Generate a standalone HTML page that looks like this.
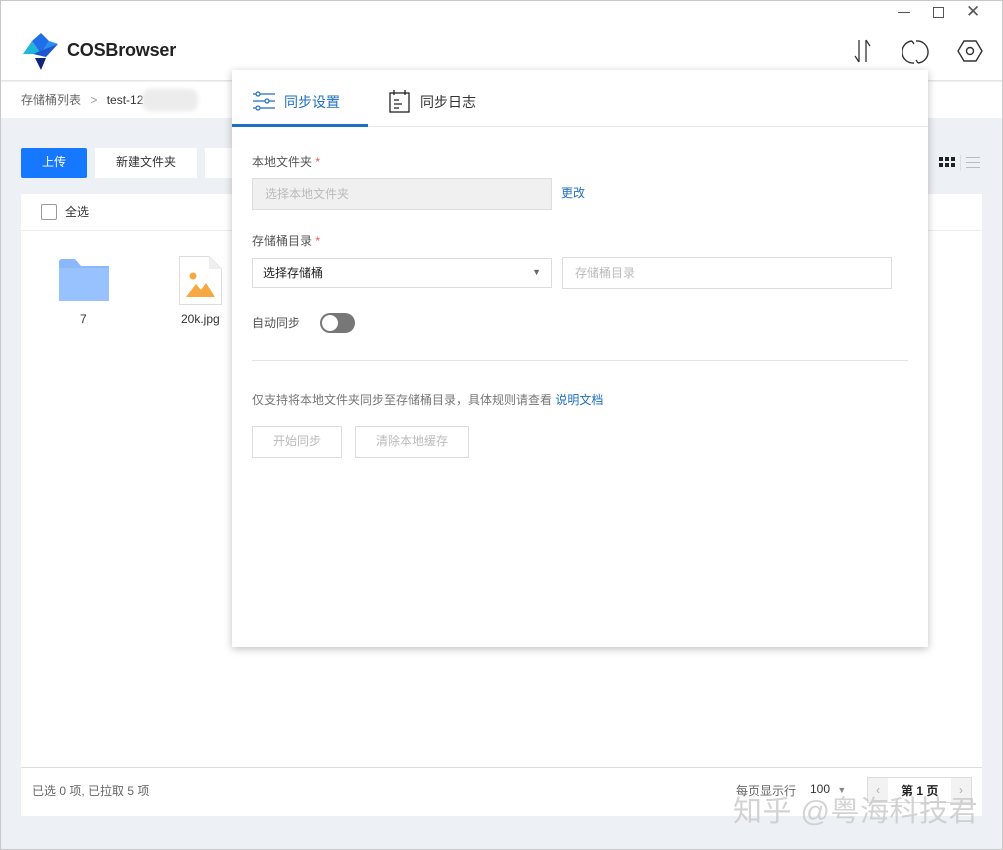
<!DOCTYPE html>
<html><head><meta charset="utf-8"><style>
*{box-sizing:border-box;margin:0;padding:0}
body{width:1003px;height:850px;overflow:hidden;font-family:"Liberation Sans","Noto Sans CJK SC",sans-serif;font-size:12px;color:#333;background:#edf0f4;position:relative}
.abs{position:absolute}
.win{position:absolute;left:0;top:0;width:1003px;height:850px;border:1px solid #c8c8c8;pointer-events:none}
</style></head><body>
<div class="abs" style="left:0;top:0;width:1003px;height:81px;background:#fff;border-bottom:1px solid #e6e6e6"></div>
<svg class="abs" style="left:21px;top:32px" width="40" height="40" viewBox="0 0 40 40">
<polygon points="2,22 11,9 20,22" fill="#1fb6d9"/><polygon points="11,9 20,22 28,9 20,1" fill="#1f6fe8"/>
<polygon points="20,22 37,12 28,9" fill="#2a8cf0"/><polygon points="12,22 37,12 25,25" fill="#1e56d0"/>
<polygon points="14,26 25,26 20,38" fill="#12237a"/></svg>
<div class="abs" style="left:67px;top:40px;font-size:18px;font-weight:bold;color:#222;letter-spacing:-0.2px">COSBrowser</div>
<div class="abs" style="left:898px;top:12px;width:12px;border-top:1px solid #555"></div>
<div class="abs" style="left:933px;top:7px;width:11px;height:11px;border:1px solid #555"></div>
<div class="abs" style="left:966px;top:2px;font-size:17px;color:#555">✕</div>
<svg class="abs" style="left:850px;top:38px" width="25" height="26"><path d="M9 2V24M9 24L5 18M16 24V2M16 2L20 8" stroke="#333" stroke-width="1.3" fill="none"/></svg>
<svg class="abs" style="left:902px;top:38px" width="28" height="28"><path d="M10 3A11 11 0 0 0 12 25M16 25A11 11 0 0 0 14 3M10 3L12 6M16 25L14 22" stroke="#333" stroke-width="1.4" fill="none"/></svg>
<svg class="abs" style="left:957px;top:39px" width="26" height="24"><polygon points="7,2 19,2 25,12 19,22 7,22 1,12" stroke="#333" stroke-width="1.4" fill="none"/><circle cx="13" cy="12" r="3.5" stroke="#333" stroke-width="1.4" fill="none"/></svg>
<div class="abs" style="left:0;top:82px;width:1003px;height:36px;background:#fff"></div>
<div class="abs" style="left:21px;top:91px;color:#666">存储桶列表 <span style="color:#999;margin:0 6px">&gt;</span> <span style="color:#333">test-12</span></div>
<div class="abs" style="left:142px;top:89px;width:56px;height:22px;background:#ececec;border-radius:8px;filter:blur(2px)"></div>
<div class="abs" style="left:21px;top:148px;width:66px;height:30px;background:#1677ff;color:#fff;text-align:center;line-height:28px;border-radius:2px">上传</div>
<div class="abs" style="left:95px;top:148px;width:102px;height:30px;background:#fff;text-align:center;line-height:28px">新建文件夹</div>
<div class="abs" style="left:205px;top:148px;width:40px;height:30px;background:#fff"></div>
<svg class="abs" style="left:939px;top:157px" width="17" height="11"><g fill="#222"><rect x="0" y="0" width="4" height="4"/><rect x="6" y="0" width="4" height="4"/><rect x="12" y="0" width="4" height="4"/><rect x="0" y="6" width="4" height="4"/><rect x="6" y="6" width="4" height="4"/><rect x="12" y="6" width="4" height="4"/></g></svg>
<div class="abs" style="left:960px;top:155px;height:16px;border-left:1px solid #ddd"></div>
<div class="abs" style="left:966px;top:157px;width:14px;height:11px;border-top:1px solid #bbb;border-bottom:1px solid #bbb"><div style="margin-top:4px;border-top:1px solid #bbb"></div></div>
<div class="abs" style="left:21px;top:194px;width:961px;height:622px;background:#fff"></div>
<div class="abs" style="left:21px;top:230px;width:961px;border-top:1px solid #eee"></div>
<div class="abs" style="left:41px;top:204px;width:16px;height:16px;border:1px solid #999;border-radius:2px"></div>
<div class="abs" style="left:65px;top:203px">全选</div>
<svg class="abs" style="left:59px;top:259px" width="50" height="42"><path d="M0 3Q0 0 3 0H16L22 7H50V42H0Z" fill="#8ab8fb"/><path d="M0 9H50V42H0Z" fill="#98c2fd"/></svg>
<div class="abs" style="left:80px;top:312px">7</div>
<svg class="abs" style="left:179px;top:256px" width="43" height="49"><path d="M0.5 0.5H30L42.5 13V48.5H0.5Z" fill="#fff" stroke="#ddd"/><path d="M30 0.5V13H42.5" fill="#eee"/><circle cx="14" cy="20" r="3.5" fill="#f7a840"/><path d="M7 41L17 28L22 34L27 27L36 41Z" fill="#f7a840"/></svg>
<div class="abs" style="left:181px;top:312px">20k.jpg</div>
<div class="abs" style="left:21px;top:767px;width:961px;border-top:1px solid #ddd"></div>
<div class="abs" style="left:32px;top:782px;color:#666">已选 0 项, 已拉取 5 项</div>
<div class="abs" style="left:736px;top:782px;color:#666">每页显示行</div>
<div class="abs" style="left:810px;top:782px;color:#333">100 <span style="color:#888;font-size:9px;margin-left:4px">▼</span></div>
<div class="abs" style="left:867px;top:777px;width:105px;height:26px;border:1px solid #ddd;background:#fff"><div style="position:absolute;left:0;top:0;width:20px;height:24px;background:#f2f2f2;color:#aaa;text-align:center;line-height:24px">‹</div><div style="position:absolute;right:0;top:0;width:20px;height:24px;background:#f2f2f2;color:#aaa;text-align:center;line-height:24px">›</div><div style="position:absolute;left:33px;top:4px;font-weight:bold;color:#222">第 1 页</div></div>
<div class="abs" style="left:733px;top:788px;font-size:29px;color:rgba(200,200,200,.8);letter-spacing:0.5px">知乎 @粤海科技君</div>

<div class="abs" style="left:232px;top:70px;width:696px;height:577px;background:#fff;box-shadow:0 2px 8px rgba(0,0,0,.25)">
 <div class="abs" style="left:0;top:56px;width:696px;border-top:1px solid #e8e8e8"></div>
 <div class="abs" style="left:0;top:54px;width:136px;height:3px;background:#1e6fbf"></div>
 <svg class="abs" style="left:21px;top:21px" width="22" height="20"><g stroke="#1e6fbf" stroke-width="1.2" fill="none"><path d="M0 3H3M7 3H22M0 10H12M16 10H22M0 17H3M7 17H22"/><circle cx="5" cy="3" r="2"/><circle cx="14" cy="10" r="2"/><circle cx="5" cy="17" r="2"/></g></svg>
 <div class="abs" style="left:52px;top:22px;font-size:14px;color:#1e6fbf">同步设置</div>
 <svg class="abs" style="left:157px;top:20px" width="22" height="23"><g stroke="#222" stroke-width="1.3" fill="none"><rect x="1" y="3" width="19" height="19"/><path d="M5 0V5M16 0V5M5 10H10M5 14H13M5 18H10"/></g></svg>
 <div class="abs" style="left:188px;top:22px;font-size:14px;color:#333">同步日志</div>
 <div class="abs" style="left:20px;top:83px;color:#555">本地文件夹 <span style="color:#e55">*</span></div>
 <div class="abs" style="left:20px;top:108px;width:300px;height:32px;background:#f0f0f0;border:1px solid #ddd;color:#bbb;padding:6px 12px">选择本地文件夹</div>
 <div class="abs" style="left:329px;top:114px;color:#1e6fbf">更改</div>
 <div class="abs" style="left:20px;top:162px;color:#555">存储桶目录 <span style="color:#e55">*</span></div>
 <div class="abs" style="left:20px;top:188px;width:300px;height:30px;border:1px solid #ddd;color:#222;padding:5px 10px">选择存储桶<span style="position:absolute;right:10px;top:8px;font-size:9px;color:#666">▼</span></div>
 <div class="abs" style="left:330px;top:187px;width:330px;height:32px;border:1px solid #ddd;color:#bbb;padding:6px 12px">存储桶目录</div>
 <div class="abs" style="left:20px;top:244px;color:#555">自动同步</div>
 <div class="abs" style="left:88px;top:243px;width:35px;height:20px;background:#777;border-radius:10px"><div style="position:absolute;left:2px;top:2px;width:16px;height:16px;background:#fff;border-radius:50%"></div></div>
 <div class="abs" style="left:20px;top:290px;width:656px;border-top:1px solid #e3e3e3"></div>
 <div class="abs" style="left:20px;top:321px;color:#777">仅支持将本地文件夹同步至存储桶目录，具体规则请查看 <span style="color:#1e6fbf">说明文档</span></div>
 <div class="abs" style="left:20px;top:356px;width:90px;height:32px;border:1px solid #ddd;color:#bbb;text-align:center;line-height:28px">开始同步</div>
 <div class="abs" style="left:123px;top:356px;width:114px;height:32px;border:1px solid #ddd;color:#bbb;text-align:center;line-height:28px">清除本地缓存</div>
</div>
<div class="win"></div>
</body></html>
